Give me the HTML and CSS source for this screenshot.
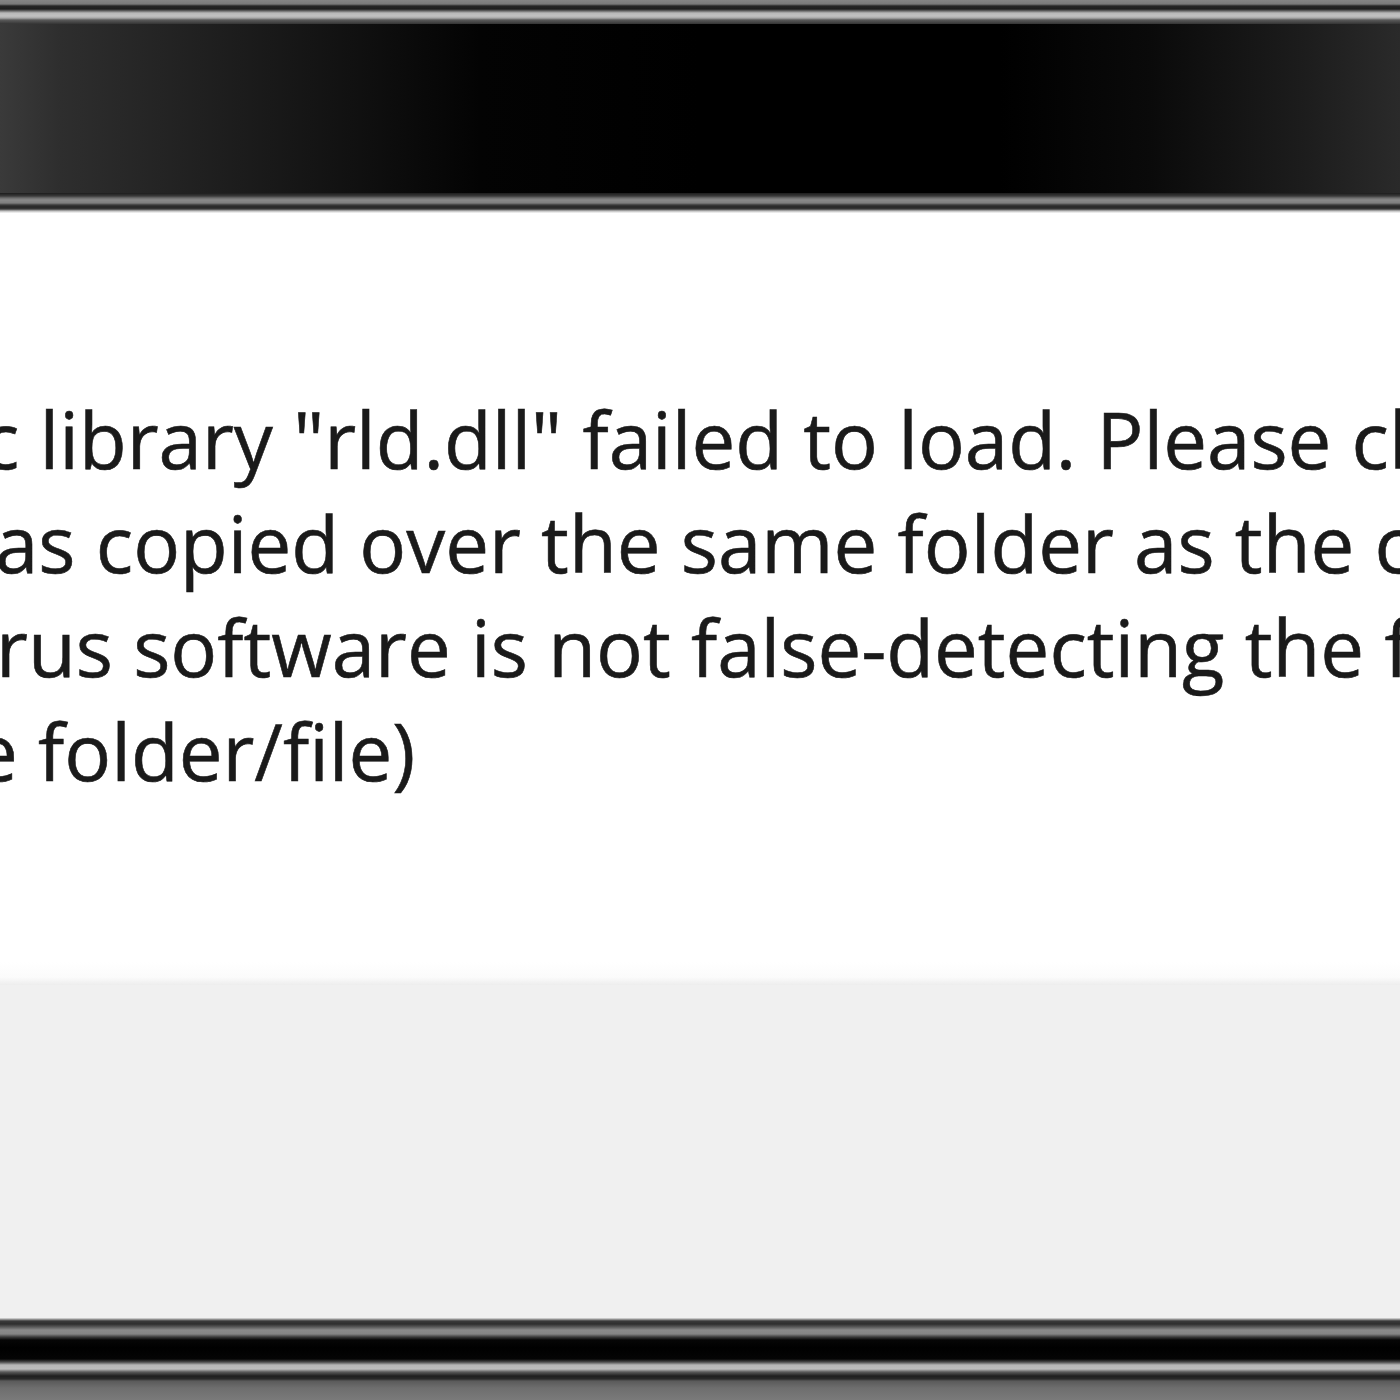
FILE: index.html
```html
<!DOCTYPE html>
<html lang="en">
<head>
<meta charset="utf-8">
<title>Error</title>
<link rel="stylesheet" href="styles.css">
</head>
<body>
<div class="window">
  <div class="frame-top">
    <div class="rim"></div>
    <div class="titlebar"></div>
    <div class="rim-bottom"></div>
  </div>
  <div class="content">
    <div class="message">
      <p class="line l1"><span class="lead">The dynami</span>c library "rld.dll" failed to load. Please check</p>
      <p class="line l2"><span class="lead">the file w</span>as copied over the same folder as the crack</p>
      <p class="line l3"><span class="lead">antivi</span>rus software is not false-detecting the file</p>
      <p class="line l4"><span class="lead">(exclude th</span>e folder/file)</p>
    </div>
  </div>
  <div class="footer"></div>
  <div class="frame-bottom"></div>
</div>
</body>
</html>
```

FILE: styles.css
```css
html, body {
  margin: 0;
  padding: 0;
  width: 1400px;
  height: 1400px;
  overflow: hidden;
  background: #fff;
}

.window {
  display: flex;
  flex-direction: column;
  width: 1400px;
  height: 1400px;
  overflow: hidden;
}

.frame-top {
  display: flex;
  flex-direction: column;
  height: 213px;
  flex: none;
}

.rim {
  height: 24px;
  background: linear-gradient(to bottom,
    #858585 0px, #7a7a7a 4px,
    #262626 6px, #1e1e1e 9px,
    #6a6a6a 11px, #b8b8b8 13px, #c2c2c2 16px, #a8a8a8 18px,
    #5a5a5a 20px, #343434 24px);
}

.titlebar {
  flex: 1;
  background: linear-gradient(to right,
      #3a3a3a 0px, #2e2e2e 60px, #202020 200px, #0e0e0e 380px,
      #030303 480px, #000 700px, #000 1000px, #0a0a0a 1150px,
      #1c1c1c 1300px, #2a2a2a 1400px);
}

.rim-bottom {
  height: 20px;
  background: linear-gradient(to bottom,
    #1c1c1c 0px, #3a3a3a 3px, #6e6e6e 5px, #8a8a8a 7px, #7e7e7e 10px,
    #3a3a3a 12px, #262626 14px, #3a3a3a 16px, #bdbdbd 18px, #fafafa 20px);
}

.content {
  height: 772px;
  flex: none;
  background: linear-gradient(to bottom, #ffffff 0%, #ffffff 97%, #fbfbfb 99%, #ededed 100%);
  overflow: hidden;
}

.message {
  padding-top: 174px;
  font-family: "Open Sans", "Noto Sans", sans-serif;
  font-size: 78px;
  line-height: 104px;
  word-spacing: 0;
  color: #1a1a1a;
  -webkit-text-stroke: 0.6px #1a1a1a;
  filter: blur(0.7px);
}

.line {
  margin: 0;
  white-space: nowrap;
  display: flex;
}

.lead {
  display: flex;
  justify-content: flex-end;
  width: 500px;
  flex: none;
  overflow: hidden;
}

.l1 { margin-left: -518px; }
.l2 { margin-left: -505px; }
.l3 { margin-left: -504px; }
.l4 { margin-left: -526px; }

.footer {
  flex: 1;
  background: #f0f0f0;
}

.frame-bottom {
  height: 82px;
  flex: none;
  background: linear-gradient(to bottom,
    #e2e2e2 0px, #3a3a3a 3px, #2e2e2e 6px, #5a5a5a 9px, #8a8a8a 12px, #848484 16px,
    #3a3a3a 19px, #060606 22px, #000 30px, #050505 41px,
    #4a4a4a 44px, #b6b6b6 47px, #bcbcbc 51px, #5a5a5a 54px,
    #1e1e1e 58px, #2a2a2a 61px, #5a5a5a 63px, #6e6e6e 70px, #7a7a7a 82px);
}
```
